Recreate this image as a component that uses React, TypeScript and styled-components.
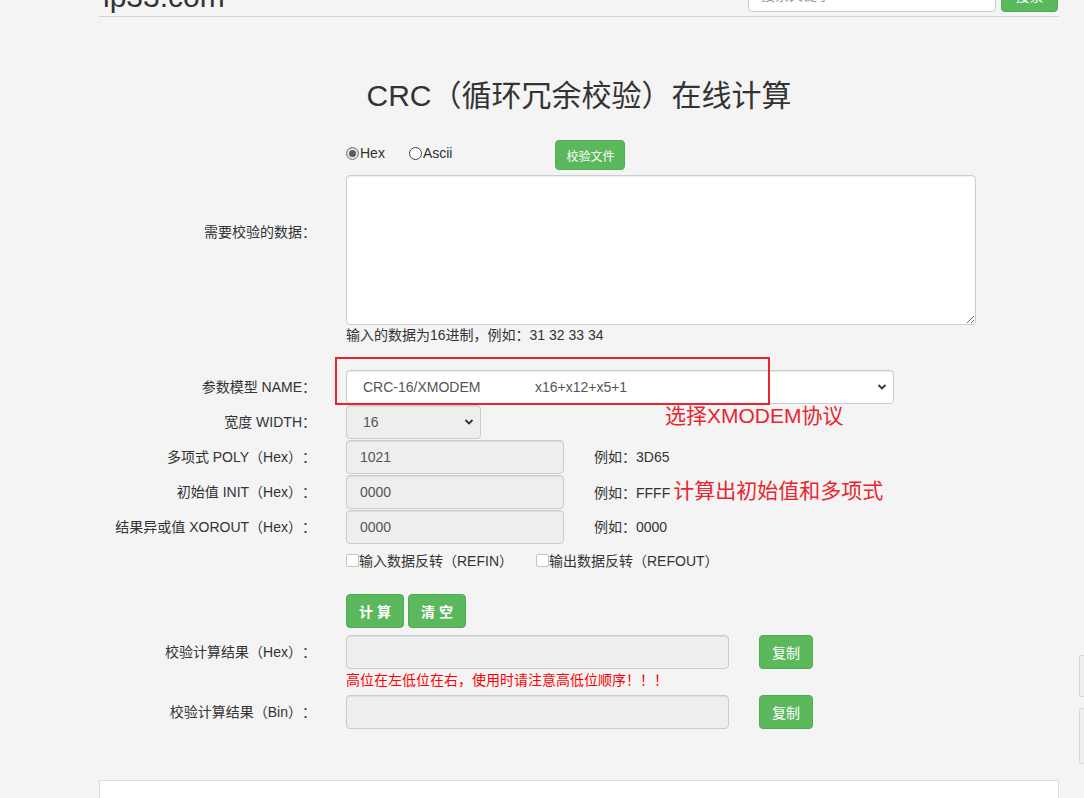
import React from "react";
import styled, { createGlobalStyle } from "styled-components";

const FONT = `"Liberation Sans", "Noto Sans CJK SC", sans-serif`;
const ANNOT = "#e9262f";

const Global = createGlobalStyle`
  html, body { margin: 0; padding: 0; background: #f4f4f4; overflow: hidden; }
  body { font-family: ${FONT}; font-size: 14px; color: #333; text-spacing-trim: space-all; }
  * { box-sizing: border-box; }
`;

const Page = styled.div`
  width: 960px;
  margin-left: 99px;
`;

const Header = styled.header`
  display: flex;
  align-items: flex-end;
  justify-content: space-between;
  height: 53px;
  margin-top: -36px;
  padding-bottom: 4px;
  border-bottom: 1px solid #d5d5d5;
`;

const Logo = styled.div`
  font-size: 30px;
  line-height: 30px;
  color: #333;
  margin: 0 0 0 4px;
`;

const SearchGroup = styled.div`
  display: flex;
  align-items: flex-end;
  gap: 5px;
  margin-right: 1px;
`;

const SearchInput = styled.input`
  width: 248px;
  height: 34px;
  padding: 6px 12px;
  font: 14px ${FONT};
  background: #fff;
  border: 1px solid #ccc;
  border-radius: 4px;
  &::placeholder { color: #999; }
`;

const Title = styled.h2`
  margin: 62px 0 0;
  font-size: 30px;
  line-height: 33px;
  font-weight: 400;
  text-align: center;
  color: #333;
`;

const Row = styled.div<{ $mt?: number }>`
  display: grid;
  grid-template-columns: 217px 1fr;
  column-gap: 30px;
  align-items: center;
  margin-top: ${(p) => p.$mt ?? 0}px;
`;

const Label = styled.label<{ $top?: number }>`
  text-align: right;
  font-size: 14px;
  line-height: 20px;
  color: #333;
  white-space: nowrap;
  ${(p) => (p.$top ? `align-self: start; padding-top: ${p.$top}px;` : "")}
`;

const Field = styled.div`
  display: flex;
  align-items: center;
  position: relative;
  min-width: 0;
`;

const RadioLabel = styled.label`
  display: inline-flex;
  align-items: center;
  font-size: 14px;
  line-height: 20px;
  color: #333;
  margin: 0 24px 4px 0;
`;

const Radio = styled.input.attrs({ type: "radio" })`
  appearance: none;
  margin: 0 1px 0 0;
  width: 13px;
  height: 13px;
  border-radius: 50%;
  border: 1px solid #444;
  background: #fff;
  &:checked {
    border-color: #8a8a8a;
    background: #5c5c5c;
    box-shadow: inset 0 0 0 2px #e6e6e6;
  }
`;

const GreenButton = styled.button<{ $w?: number; $h?: number; $fs?: number; $ml?: number; $bold?: boolean }>`
  width: ${(p) => (p.$w ? `${p.$w}px` : "auto")};
  height: ${(p) => p.$h ?? 34}px;
  margin-left: ${(p) => p.$ml ?? 0}px;
  padding: 0 10px;
  font-family: ${FONT};
  font-size: ${(p) => p.$fs ?? 14}px;
  font-weight: ${(p) => (p.$bold ? 700 : 400)};
  color: #fff;
  background: #5cb85c;
  border: 1px solid #4cae4c;
  border-radius: 4px;
  white-space: pre;
  cursor: pointer;
`;

const DataArea = styled.textarea`
  display: block;
  width: 630px;
  height: 150px;
  padding: 6px 12px;
  font: 14px ${FONT};
  color: #555;
  background: #fff;
  border: 1px solid #ccc;
  border-radius: 4px;
  box-shadow: inset 0 1px 1px rgba(0, 0, 0, 0.075);
`;

const Help = styled.div<{ $red?: boolean }>`
  font-size: 14px;
  line-height: 20px;
  color: ${(p) => (p.$red ? "#f00" : "#333")};
  white-space: nowrap;
`;

const Control = styled.input<{ $w: number }>`
  width: ${(p) => p.$w}px;
  height: 34px;
  padding: 6px 13px;
  font: 14px ${FONT};
  color: #555;
  background: #eee;
  border: 1px solid #ccc;
  border-radius: 4px;
  box-shadow: inset 0 1px 1px rgba(0, 0, 0, 0.075);
`;

const SelectWrap = styled.div<{ $w: number }>`
  position: relative;
  width: ${(p) => p.$w}px;
`;

const Select = styled.select<{ $gray?: boolean }>`
  appearance: none;
  display: block;
  width: 100%;
  height: 34px;
  padding: 6px 28px 6px 16px;
  font: 14px ${FONT};
  color: #555;
  background: ${(p) => (p.$gray ? "#eee" : "#fff")};
  border: 1px solid #ccc;
  border-radius: 4px;
  box-shadow: inset 0 1px 1px rgba(0, 0, 0, 0.075);
`;

const Chevron = styled.svg`
  position: absolute;
  right: 7px;
  top: 13px;
  width: 10px;
  height: 8px;
  pointer-events: none;
`;

const Example = styled.span`
  margin-left: 30px;
  font-size: 14px;
  line-height: 20px;
  color: #333;
  white-space: nowrap;
`;

const Note = styled.span`
  margin-left: 3px;
  font-size: 21px;
  line-height: 20px;
  color: ${ANNOT};
`;

const AnnotBox = styled.div`
  position: absolute;
  left: -11px;
  top: -13px;
  width: 435px;
  height: 48px;
  border: 2px solid ${ANNOT};
  pointer-events: none;
`;

const AnnotText = styled.div`
  position: absolute;
  left: 319px;
  top: 32px;
  font-size: 21px;
  line-height: 28px;
  color: ${ANNOT};
  white-space: nowrap;
`;

const CheckLabel = styled.label<{ $w?: number }>`
  display: inline-flex;
  align-items: flex-start;
  width: ${(p) => (p.$w ? `${p.$w}px` : "auto")};
  font-size: 14px;
  line-height: 20px;
  color: #333;
  white-space: nowrap;
`;

const Checkbox = styled.input.attrs({ type: "checkbox" })`
  appearance: none;
  margin: 3px 0 0 0;
  width: 13px;
  height: 13px;
  background: #fff;
  border: 1px solid #c4c4c4;
  border-radius: 2px;
`;

const ButtonRow = styled.div`
  display: flex;
  gap: 4px;
`;

const Footer = styled.div`
  margin-top: 51px;
  height: 60px;
  background: #fff;
  border: 1px solid #ddd;
`;

const SideTab = styled.div<{ $top: number; $h: number }>`
  position: fixed;
  left: 1079px;
  top: ${(p) => p.$top}px;
  width: 30px;
  height: ${(p) => p.$h}px;
  background: #efefef;
  border: 1px solid #d6d6d6;
  border-radius: 2px;
`;

const ChevronIcon = () => (
  <Chevron viewBox="0 0 10 8">
    <path d="M1.5 2 L5 5.5 L8.5 2" fill="none" stroke="#333" strokeWidth="1.8" />
  </Chevron>
);

const NB = "\u00a0".repeat(14);

export default function App() {
  return (
    <>
      <Global />
      <Page>
        <Header>
          <Logo>ip33.com</Logo>
          <SearchGroup>
            <SearchInput placeholder="搜索关键字" />
            <GreenButton $w={57}>搜索</GreenButton>
          </SearchGroup>
        </Header>

        <Title>CRC（循环冗余校验）在线计算</Title>

        <Row $mt={28}>
          <Label />
          <Field>
            <RadioLabel>
              <Radio name="fmt" defaultChecked />
              Hex
            </RadioLabel>
            <RadioLabel>
              <Radio name="fmt" />
              Ascii
            </RadioLabel>
            <GreenButton $w={70} $h={30} $fs={12} $ml={79}>
              校验文件
            </GreenButton>
          </Field>
        </Row>

        <Row $mt={5}>
          <Label $top={47}>需要校验的数据：</Label>
          <Field>
            <DataArea />
          </Field>
        </Row>

        <Row>
          <Label />
          <Help>输入的数据为16进制，例如：31 32 33 34</Help>
        </Row>

        <Row $mt={25}>
          <Label>参数模型 NAME：</Label>
          <Field>
            <SelectWrap $w={548}>
              <Select defaultValue="xmodem">
                <option value="xmodem">{`CRC-16/XMODEM${NB}x16+x12+x5+1`}</option>
              </Select>
              <ChevronIcon />
            </SelectWrap>
            <AnnotBox />
            <AnnotText>选择XMODEM协议</AnnotText>
          </Field>
        </Row>

        <Row $mt={1}>
          <Label>宽度 WIDTH：</Label>
          <Field>
            <SelectWrap $w={135}>
              <Select $gray defaultValue="16">
                <option value="16">16</option>
              </Select>
              <ChevronIcon />
            </SelectWrap>
          </Field>
        </Row>

        <Row $mt={1}>
          <Label>多项式 POLY（Hex）：</Label>
          <Field>
            <Control $w={218} defaultValue="1021" readOnly />
            <Example>例如：3D65</Example>
          </Field>
        </Row>

        <Row $mt={1}>
          <Label>初始值 INIT（Hex）：</Label>
          <Field>
            <Control $w={218} defaultValue="0000" readOnly />
            <Example>
              例如：FFFF<Note>计算出初始值和多项式</Note>
            </Example>
          </Field>
        </Row>

        <Row $mt={1}>
          <Label>结果异或值 XOROUT（Hex）：</Label>
          <Field>
            <Control $w={218} defaultValue="0000" readOnly />
            <Example>例如：0000</Example>
          </Field>
        </Row>

        <Row $mt={7}>
          <Label />
          <Field>
            <CheckLabel $w={190}>
              <Checkbox />
              输入数据反转（REFIN）
            </CheckLabel>
            <CheckLabel>
              <Checkbox />
              输出数据反转（REFOUT）
            </CheckLabel>
          </Field>
        </Row>

        <Row $mt={23}>
          <Label />
          <ButtonRow>
            <GreenButton $w={58} $bold>计 算</GreenButton>
            <GreenButton $w={58} $bold>清 空</GreenButton>
          </ButtonRow>
        </Row>

        <Row $mt={7}>
          <Label>校验计算结果（Hex）：</Label>
          <Field>
            <Control $w={383} readOnly />
            <GreenButton $w={54} $ml={30}>复制</GreenButton>
          </Field>
        </Row>

        <Row $mt={1}>
          <Label />
          <Help $red>高位在左低位在右，使用时请注意高低位顺序！！！</Help>
        </Row>

        <Row $mt={5}>
          <Label>校验计算结果（Bin）：</Label>
          <Field>
            <Control $w={383} readOnly />
            <GreenButton $w={54} $ml={30}>复制</GreenButton>
          </Field>
        </Row>

        <Footer />
      </Page>
      <SideTab $top={655} $h={42} />
      <SideTab $top={708} $h={56} />
    </>
  );
}
